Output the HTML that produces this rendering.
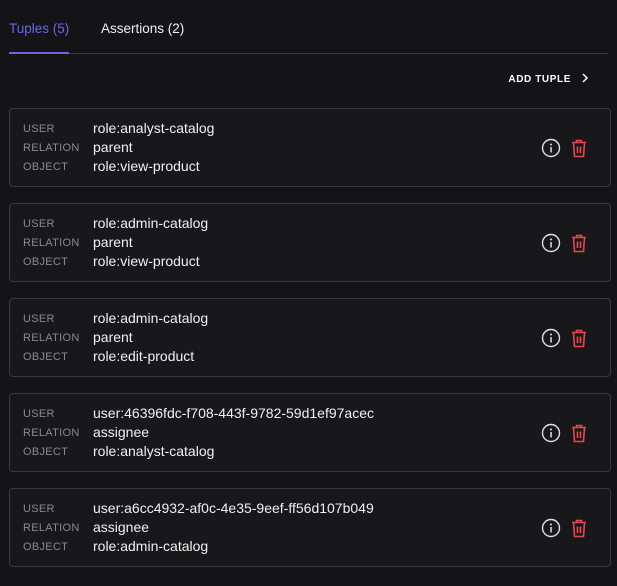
<!DOCTYPE html>
<html><head><style>
body{margin:0;background:#141416;width:617px;height:586px;font-family:"Liberation Sans",sans-serif;overflow:hidden;position:relative}
.tab{position:absolute;top:21px;font-size:13.5px}
.line{position:absolute;left:9px;right:9px;top:53px;height:1px;background:#3a3a3e}
.act{position:absolute;left:9px;width:60px;top:52px;height:2px;background:#6c63f0}
.add{position:absolute;right:46px;top:74px;color:#fff;font-size:10px;font-weight:bold;letter-spacing:.6px}
.card{position:absolute;left:9px;width:600px;height:77px;border:1px solid #3a3a3e;border-radius:4px;background:#18181a}
.r{position:absolute;left:13px;font-size:11px;color:#8a8a8e;letter-spacing:.3px}
.v{position:absolute;left:83px;font-size:14px;color:#f0f0f0}
.ic{position:absolute;left:530px;top:29px}
</style></head><body>
<div class="tab" style="left:9px;color:#6c63f0">Tuples (5)</div>
<div class="tab" style="left:101px;color:#f0f0f0">Assertions (2)</div>
<div class="line"></div><div class="act"></div>
<div class="add">ADD TUPLE</div>
<svg style="position:absolute;left:580px;top:72px" width="10" height="12"><path d="M3 2l4 4-4 4" stroke="#fff" stroke-width="1.5" fill="none"/></svg>
<script>
const d=[["role:analyst-catalog","parent","role:view-product"],["role:admin-catalog","parent","role:view-product"],["role:admin-catalog","parent","role:edit-product"],["user:46396fdc-f708-443f-9782-59d1ef97acec","assignee","role:analyst-catalog"],["user:a6cc4932-af0c-4e35-9eef-ff56d107b049","assignee","role:admin-catalog"]];
const L=["USER","RELATION","OBJECT"];
d.forEach((t,i)=>{let h=`<div class="card" style="top:${108+i*95}px">`;
t.forEach((x,j)=>{h+=`<div class="r" style="top:${14+j*19}px">${L[j]}</div><div class="v" style="top:${11+j*19}px">${x}</div>`});
h+=`<svg class="ic" width="60" height="22"><circle cx="11" cy="10" r="8.5" stroke="#e0e0e0" stroke-width="1.4" fill="none"/><rect x="10.3" y="9" width="1.5" height="5.5" fill="#e0e0e0"/><circle cx="11" cy="6.5" r="1" fill="#e0e0e0"/><g stroke="#e5484d" stroke-width="1.6" fill="none"><path d="M32 4.5h14M36.5 4.5v-2h5v2M33.5 4.5l1 14h9l1-14"/><path d="M37.5 8.5v6.5M40.5 8.5v6.5"/></g></svg></div>`;
document.write(h)});
</script>
</body></html>
